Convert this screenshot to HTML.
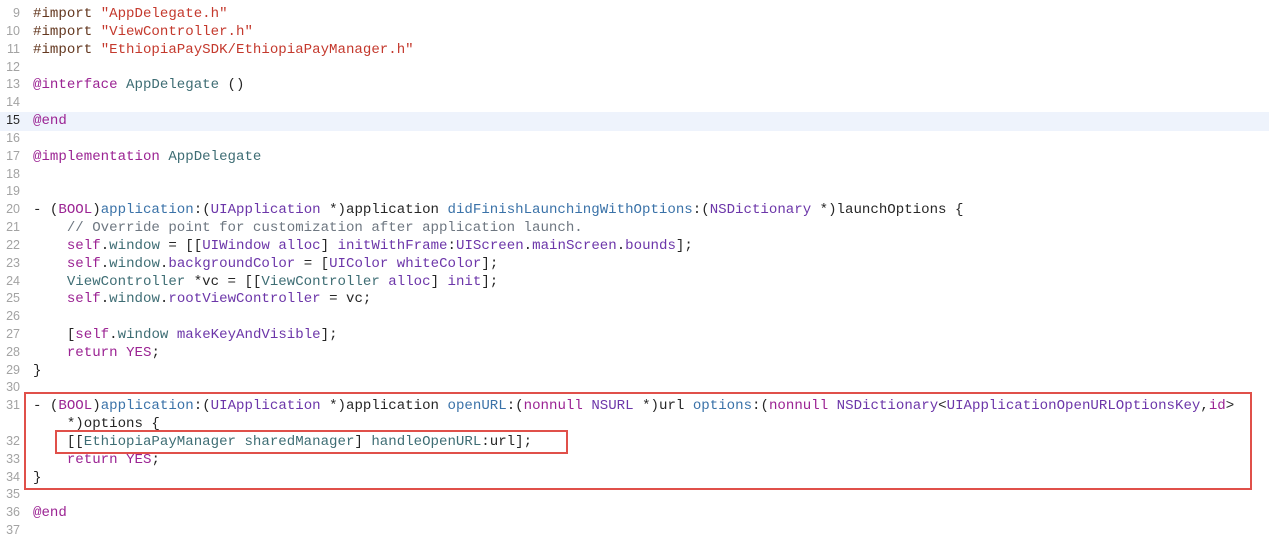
<!DOCTYPE html>
<html><head><meta charset="utf-8"><style>
html,body{margin:0;padding:0;background:#fff;width:1269px;height:539px;overflow:hidden;position:relative}
.r{position:absolute;left:0;width:1269px;height:18px;line-height:18px;white-space:pre;font-family:"Liberation Mono",monospace;font-size:14.1px;color:#262626}
.n{position:absolute;left:0;width:20px;text-align:right;font-family:"Liberation Sans",sans-serif;font-size:12.5px;color:#a3a3a3;line-height:17px}
.c{position:absolute;left:33px}
.k{color:#9b2393}.i{color:#643820}.s{color:#c4392d}.p{color:#3e6d74}.t{color:#6c36a9}.m{color:#3a72a8}.cm{color:#6e7781}
.hl{position:absolute;left:0;top:112px;width:1269px;height:19px;background:#eef3fc}
.box{position:absolute;border:2px solid #e0504a;box-sizing:border-box}
</style></head><body>
<div class="hl"></div>
<div class="r" style="top:-13px"><span class="n">8</span></div>
<div class="r" style="top:5px"><span class="n">9</span><span class="c"><span class="i">#import</span> <span class="s">"AppDelegate.h"</span></span></div>
<div class="r" style="top:22.8px"><span class="n">10</span><span class="c"><span class="i">#import</span> <span class="s">"ViewController.h"</span></span></div>
<div class="r" style="top:40.7px"><span class="n">11</span><span class="c"><span class="i">#import</span> <span class="s">"EthiopiaPaySDK/EthiopiaPayManager.h"</span></span></div>
<div class="r" style="top:58.5px"><span class="n">12</span></div>
<div class="r" style="top:76.3px"><span class="n">13</span><span class="c"><span class="k">@interface</span> <span class="p">AppDelegate</span> ()</span></div>
<div class="r" style="top:94.2px"><span class="n">14</span></div>
<div class="r" style="top:112px"><span class="n" style="color:#262626">15</span><span class="c"><span class="k">@end</span></span></div>
<div class="r" style="top:129.8px"><span class="n">16</span></div>
<div class="r" style="top:147.6px"><span class="n">17</span><span class="c"><span class="k">@implementation</span> <span class="p">AppDelegate</span></span></div>
<div class="r" style="top:165.5px"><span class="n">18</span></div>
<div class="r" style="top:183.3px"><span class="n">19</span></div>
<div class="r" style="top:201.1px"><span class="n">20</span><span class="c">- (<span class="k">BOOL</span>)<span class="m">application</span>:(<span class="t">UIApplication</span> *)application <span class="m">didFinishLaunchingWithOptions</span>:(<span class="t">NSDictionary</span> *)launchOptions {</span></div>
<div class="r" style="top:219px"><span class="n">21</span><span class="c">    <span class="cm">// Override point for customization after application launch.</span></span></div>
<div class="r" style="top:236.8px"><span class="n">22</span><span class="c">    <span class="k">self</span>.<span class="p">window</span> = [[<span class="t">UIWindow</span> <span class="t">alloc</span>] <span class="t">initWithFrame</span>:<span class="t">UIScreen</span>.<span class="t">mainScreen</span>.<span class="t">bounds</span>];</span></div>
<div class="r" style="top:254.6px"><span class="n">23</span><span class="c">    <span class="k">self</span>.<span class="p">window</span>.<span class="t">backgroundColor</span> = [<span class="t">UIColor</span> <span class="t">whiteColor</span>];</span></div>
<div class="r" style="top:272.5px"><span class="n">24</span><span class="c">    <span class="p">ViewController</span> *vc = [[<span class="p">ViewController</span> <span class="t">alloc</span>] <span class="t">init</span>];</span></div>
<div class="r" style="top:290.3px"><span class="n">25</span><span class="c">    <span class="k">self</span>.<span class="p">window</span>.<span class="t">rootViewController</span> = vc;</span></div>
<div class="r" style="top:308.1px"><span class="n">26</span></div>
<div class="r" style="top:325.9px"><span class="n">27</span><span class="c">    [<span class="k">self</span>.<span class="p">window</span> <span class="t">makeKeyAndVisible</span>];</span></div>
<div class="r" style="top:343.8px"><span class="n">28</span><span class="c">    <span class="k">return</span> <span class="k">YES</span>;</span></div>
<div class="r" style="top:361.6px"><span class="n">29</span><span class="c">}</span></div>
<div class="r" style="top:379.4px"><span class="n">30</span></div>
<div class="r" style="top:397.3px"><span class="n">31</span><span class="c">- (<span class="k">BOOL</span>)<span class="m">application</span>:(<span class="t">UIApplication</span> *)application <span class="m">openURL</span>:(<span class="k">nonnull</span> <span class="t">NSURL</span> *)url <span class="m">options</span>:(<span class="k">nonnull</span> <span class="t">NSDictionary</span>&lt;<span class="t">UIApplicationOpenURLOptionsKey</span>,<span class="k">id</span>&gt;</span></div>
<div class="r" style="top:415.1px"><span class="c">    *)options {</span></div>
<div class="r" style="top:432.9px"><span class="n">32</span><span class="c">    [[<span class="p">EthiopiaPayManager</span> <span class="p">sharedManager</span>] <span class="p">handleOpenURL</span>:url];</span></div>
<div class="r" style="top:450.7px"><span class="n">33</span><span class="c">    <span class="k">return</span> <span class="k">YES</span>;</span></div>
<div class="r" style="top:468.6px"><span class="n">34</span><span class="c">}</span></div>
<div class="r" style="top:486.4px"><span class="n">35</span></div>
<div class="r" style="top:504.2px"><span class="n">36</span><span class="c"><span class="k">@end</span></span></div>
<div class="r" style="top:522px"><span class="n">37</span></div>
<div class="box" style="left:24px;top:392px;width:1228px;height:98px"></div>
<div class="box" style="left:55px;top:430px;width:513px;height:24px"></div>
</body></html>
